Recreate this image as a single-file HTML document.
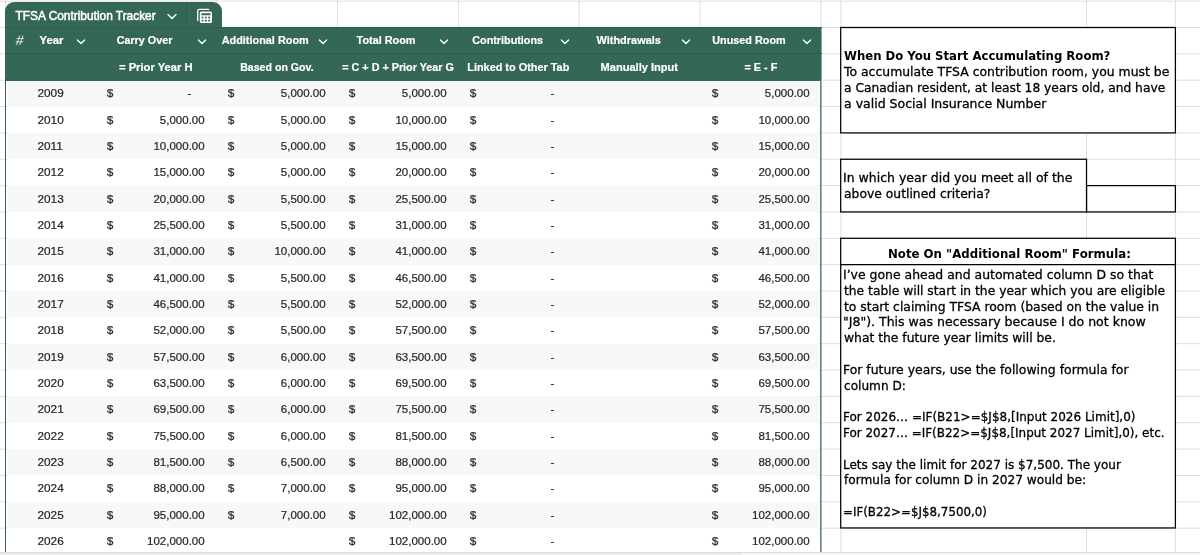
<!DOCTYPE html>
<html lang="en"><head><meta charset="utf-8"><title>TFSA Contribution Tracker</title>
<style>
html,body{margin:0;padding:0;background:#fff;}
body{width:1200px;height:555px;overflow:hidden;position:relative;font-family:"Liberation Sans",sans-serif;}
#sheet{will-change:transform;position:absolute;left:0;top:0;width:1200px;height:555px;overflow:hidden;background:#fff;}
.gridsvg,.boxsvg{position:absolute;left:0;top:0;}
.tbl .row{position:absolute;left:7px;width:812px;height:26.35px;background:#fff;font-size:11.8px;color:#262626;-webkit-text-stroke:0.22px #262626;line-height:26.35px;white-space:nowrap;}
.tbl .row.odd{background:#f6f8f9;}
.tbl .row span{position:absolute;top:0;margin-left:-7px;}
.tbl .row .yr{left:37.5px;}
.tbl .row .n{width:109.7px;text-align:right;transform:scaleX(0.977);transform-origin:100% 50%;}
.tbl .row .n.dash{width:96.3px;}
.hdr{position:absolute;left:5px;top:27px;width:816px;box-shadow:1px 0 0 #8fac9f;height:53.5px;background:#356854;}
.tab{position:absolute;left:5px;top:2px;width:217px;height:26px;background:#356854;border-radius:9px 9px 0 0;}
.tab .ttl{position:absolute;left:10.6px;top:0.6px;line-height:26px;font-size:11.9px;color:#fff;-webkit-text-stroke:0.5px #fff;white-space:nowrap;}
.tab .tsep{position:absolute;left:180.5px;top:0;width:1px;height:26px;background:#2e5e4b;}
.ticon{position:absolute;}
.hdr .t{position:absolute;color:#fff;-webkit-text-stroke:0.2px #fff;font-size:11.8px;white-space:nowrap;text-align:center;line-height:26.35px;}
.hdr .t b{display:inline-block;transform:scaleX(0.92);transform-origin:50% 50%;}
.hdr .hash{font-size:14px;-webkit-text-stroke:0;opacity:.92;}
.hdr .hash i{display:inline-block;font-style:normal;transform:skewX(-8deg);}
.hdr .sep0{position:absolute;left:0;top:0;width:817px;height:1px;background:#2f5f4c;}
.hdr .r1{top:0.2px;}
.hdr .r2{top:26.6px;}
.hdr .sep{position:absolute;left:0;top:26.4px;width:817px;height:1px;background:#2c5a48;}
.lb{position:absolute;left:5px;top:27px;width:1px;height:526px;background:#356854;}
.rb{position:absolute;left:820px;top:80px;width:1px;height:473px;background:#5a8773;box-shadow:1px 0 0 #9db9ad;}
svg.chev{position:absolute;}
.box{position:absolute;border:1px solid #000;box-sizing:border-box;background:#fff;}
.note{font-family:"DejaVu Sans","Liberation Sans",sans-serif;color:#000;-webkit-text-stroke:0.3px #000;font-size:12.4px;line-height:16px;white-space:nowrap;}
.note p b{-webkit-text-stroke:0;}
.note p{position:absolute;margin:0;transform-origin:0 50%;height:16px;}
.botline{position:absolute;left:0;top:552px;width:1200px;height:1px;background:#dcdcdc;}
.botbar{position:absolute;left:0;top:553px;width:742px;height:2px;background:#ececec;}
.botbar2{position:absolute;left:742px;top:553px;width:458px;height:2px;background:#f7f7f7;}

</style></head>
<body>
<div id="sheet">
<svg class="gridsvg" width="1200" height="555" viewBox="0 0 1200 555"><g stroke="#dedede" stroke-width="1" fill="none">
<path d="M0 1.15H1200M0 27.50H1200M0 53.85H1200M0 80.20H1200M0 106.55H1200M0 132.90H1200M0 159.25H1200M0 185.60H1200M0 211.95H1200M0 238.30H1200M0 264.65H1200M0 291.00H1200M0 317.35H1200M0 343.70H1200M0 370.05H1200M0 396.40H1200M0 422.75H1200M0 449.10H1200M0 475.45H1200M0 501.80H1200M0 528.15H1200M5.4 0V552M95.8 0V552M216.6 0V552M337.5 0V552M458.4 0V552M579.2 0V552M700.1 0V552M820.9 0V552M840.85 0V552M1086.5 0V552M1175.4 0V552"/></g></svg>
<div class="tbl">
<div class="row odd" style="top:80.20px"><span class="yr">2009</span><span class="d" style="left:106.8px">$</span><span class="n dash" style="left:95px">-</span><span class="d" style="left:227.8px">$</span><span class="n" style="left:216px">5,000.00</span><span class="d" style="left:348.8px">$</span><span class="n" style="left:337px">5,000.00</span><span class="d" style="left:469.8px">$</span><span class="n dash" style="left:458px">-</span><span class="d" style="left:711.8px">$</span><span class="n" style="left:700px">5,000.00</span></div>
<div class="row" style="top:106.55px"><span class="yr">2010</span><span class="d" style="left:106.8px">$</span><span class="n" style="left:95px">5,000.00</span><span class="d" style="left:227.8px">$</span><span class="n" style="left:216px">5,000.00</span><span class="d" style="left:348.8px">$</span><span class="n" style="left:337px">10,000.00</span><span class="d" style="left:469.8px">$</span><span class="n dash" style="left:458px">-</span><span class="d" style="left:711.8px">$</span><span class="n" style="left:700px">10,000.00</span></div>
<div class="row odd" style="top:132.90px"><span class="yr">2011</span><span class="d" style="left:106.8px">$</span><span class="n" style="left:95px">10,000.00</span><span class="d" style="left:227.8px">$</span><span class="n" style="left:216px">5,000.00</span><span class="d" style="left:348.8px">$</span><span class="n" style="left:337px">15,000.00</span><span class="d" style="left:469.8px">$</span><span class="n dash" style="left:458px">-</span><span class="d" style="left:711.8px">$</span><span class="n" style="left:700px">15,000.00</span></div>
<div class="row" style="top:159.25px"><span class="yr">2012</span><span class="d" style="left:106.8px">$</span><span class="n" style="left:95px">15,000.00</span><span class="d" style="left:227.8px">$</span><span class="n" style="left:216px">5,000.00</span><span class="d" style="left:348.8px">$</span><span class="n" style="left:337px">20,000.00</span><span class="d" style="left:469.8px">$</span><span class="n dash" style="left:458px">-</span><span class="d" style="left:711.8px">$</span><span class="n" style="left:700px">20,000.00</span></div>
<div class="row odd" style="top:185.60px"><span class="yr">2013</span><span class="d" style="left:106.8px">$</span><span class="n" style="left:95px">20,000.00</span><span class="d" style="left:227.8px">$</span><span class="n" style="left:216px">5,500.00</span><span class="d" style="left:348.8px">$</span><span class="n" style="left:337px">25,500.00</span><span class="d" style="left:469.8px">$</span><span class="n dash" style="left:458px">-</span><span class="d" style="left:711.8px">$</span><span class="n" style="left:700px">25,500.00</span></div>
<div class="row" style="top:211.95px"><span class="yr">2014</span><span class="d" style="left:106.8px">$</span><span class="n" style="left:95px">25,500.00</span><span class="d" style="left:227.8px">$</span><span class="n" style="left:216px">5,500.00</span><span class="d" style="left:348.8px">$</span><span class="n" style="left:337px">31,000.00</span><span class="d" style="left:469.8px">$</span><span class="n dash" style="left:458px">-</span><span class="d" style="left:711.8px">$</span><span class="n" style="left:700px">31,000.00</span></div>
<div class="row odd" style="top:238.30px"><span class="yr">2015</span><span class="d" style="left:106.8px">$</span><span class="n" style="left:95px">31,000.00</span><span class="d" style="left:227.8px">$</span><span class="n" style="left:216px">10,000.00</span><span class="d" style="left:348.8px">$</span><span class="n" style="left:337px">41,000.00</span><span class="d" style="left:469.8px">$</span><span class="n dash" style="left:458px">-</span><span class="d" style="left:711.8px">$</span><span class="n" style="left:700px">41,000.00</span></div>
<div class="row" style="top:264.65px"><span class="yr">2016</span><span class="d" style="left:106.8px">$</span><span class="n" style="left:95px">41,000.00</span><span class="d" style="left:227.8px">$</span><span class="n" style="left:216px">5,500.00</span><span class="d" style="left:348.8px">$</span><span class="n" style="left:337px">46,500.00</span><span class="d" style="left:469.8px">$</span><span class="n dash" style="left:458px">-</span><span class="d" style="left:711.8px">$</span><span class="n" style="left:700px">46,500.00</span></div>
<div class="row odd" style="top:291.00px"><span class="yr">2017</span><span class="d" style="left:106.8px">$</span><span class="n" style="left:95px">46,500.00</span><span class="d" style="left:227.8px">$</span><span class="n" style="left:216px">5,500.00</span><span class="d" style="left:348.8px">$</span><span class="n" style="left:337px">52,000.00</span><span class="d" style="left:469.8px">$</span><span class="n dash" style="left:458px">-</span><span class="d" style="left:711.8px">$</span><span class="n" style="left:700px">52,000.00</span></div>
<div class="row" style="top:317.35px"><span class="yr">2018</span><span class="d" style="left:106.8px">$</span><span class="n" style="left:95px">52,000.00</span><span class="d" style="left:227.8px">$</span><span class="n" style="left:216px">5,500.00</span><span class="d" style="left:348.8px">$</span><span class="n" style="left:337px">57,500.00</span><span class="d" style="left:469.8px">$</span><span class="n dash" style="left:458px">-</span><span class="d" style="left:711.8px">$</span><span class="n" style="left:700px">57,500.00</span></div>
<div class="row odd" style="top:343.70px"><span class="yr">2019</span><span class="d" style="left:106.8px">$</span><span class="n" style="left:95px">57,500.00</span><span class="d" style="left:227.8px">$</span><span class="n" style="left:216px">6,000.00</span><span class="d" style="left:348.8px">$</span><span class="n" style="left:337px">63,500.00</span><span class="d" style="left:469.8px">$</span><span class="n dash" style="left:458px">-</span><span class="d" style="left:711.8px">$</span><span class="n" style="left:700px">63,500.00</span></div>
<div class="row" style="top:370.05px"><span class="yr">2020</span><span class="d" style="left:106.8px">$</span><span class="n" style="left:95px">63,500.00</span><span class="d" style="left:227.8px">$</span><span class="n" style="left:216px">6,000.00</span><span class="d" style="left:348.8px">$</span><span class="n" style="left:337px">69,500.00</span><span class="d" style="left:469.8px">$</span><span class="n dash" style="left:458px">-</span><span class="d" style="left:711.8px">$</span><span class="n" style="left:700px">69,500.00</span></div>
<div class="row odd" style="top:396.40px"><span class="yr">2021</span><span class="d" style="left:106.8px">$</span><span class="n" style="left:95px">69,500.00</span><span class="d" style="left:227.8px">$</span><span class="n" style="left:216px">6,000.00</span><span class="d" style="left:348.8px">$</span><span class="n" style="left:337px">75,500.00</span><span class="d" style="left:469.8px">$</span><span class="n dash" style="left:458px">-</span><span class="d" style="left:711.8px">$</span><span class="n" style="left:700px">75,500.00</span></div>
<div class="row" style="top:422.75px"><span class="yr">2022</span><span class="d" style="left:106.8px">$</span><span class="n" style="left:95px">75,500.00</span><span class="d" style="left:227.8px">$</span><span class="n" style="left:216px">6,000.00</span><span class="d" style="left:348.8px">$</span><span class="n" style="left:337px">81,500.00</span><span class="d" style="left:469.8px">$</span><span class="n dash" style="left:458px">-</span><span class="d" style="left:711.8px">$</span><span class="n" style="left:700px">81,500.00</span></div>
<div class="row odd" style="top:449.10px"><span class="yr">2023</span><span class="d" style="left:106.8px">$</span><span class="n" style="left:95px">81,500.00</span><span class="d" style="left:227.8px">$</span><span class="n" style="left:216px">6,500.00</span><span class="d" style="left:348.8px">$</span><span class="n" style="left:337px">88,000.00</span><span class="d" style="left:469.8px">$</span><span class="n dash" style="left:458px">-</span><span class="d" style="left:711.8px">$</span><span class="n" style="left:700px">88,000.00</span></div>
<div class="row" style="top:475.45px"><span class="yr">2024</span><span class="d" style="left:106.8px">$</span><span class="n" style="left:95px">88,000.00</span><span class="d" style="left:227.8px">$</span><span class="n" style="left:216px">7,000.00</span><span class="d" style="left:348.8px">$</span><span class="n" style="left:337px">95,000.00</span><span class="d" style="left:469.8px">$</span><span class="n dash" style="left:458px">-</span><span class="d" style="left:711.8px">$</span><span class="n" style="left:700px">95,000.00</span></div>
<div class="row odd" style="top:501.80px"><span class="yr">2025</span><span class="d" style="left:106.8px">$</span><span class="n" style="left:95px">95,000.00</span><span class="d" style="left:227.8px">$</span><span class="n" style="left:216px">7,000.00</span><span class="d" style="left:348.8px">$</span><span class="n" style="left:337px">102,000.00</span><span class="d" style="left:469.8px">$</span><span class="n dash" style="left:458px">-</span><span class="d" style="left:711.8px">$</span><span class="n" style="left:700px">102,000.00</span></div>
<div class="row" style="top:528.15px"><span class="yr">2026</span><span class="d" style="left:106.8px">$</span><span class="n" style="left:95px">102,000.00</span><span class="d" style="left:348.8px">$</span><span class="n" style="left:337px">102,000.00</span><span class="d" style="left:469.8px">$</span><span class="n dash" style="left:458px">-</span><span class="d" style="left:711.8px">$</span><span class="n" style="left:700px">102,000.00</span></div>
</div>
<div class="tab"><span class="ttl">TFSA Contribution Tracker</span><i class="tsep"></i><svg class="chev" style="left:160.7px;top:10.6px" width="12" height="8" viewBox="0 0 12 8"><polyline points="2,1.6 6,5.6 10,1.6" fill="none" stroke="#fff" stroke-width="1.35" stroke-linecap="round" stroke-linejoin="round"/></svg><svg class="ticon" style="left:191px;top:6px" width="18" height="18" viewBox="0 0 18 18">
<path d="M1.7,12.4 V3.4 Q1.7,1.4 3.7,1.4 H12.6" fill="none" stroke="#fff" stroke-width="1.3" stroke-linecap="round"/>
<rect x="3.8" y="3.5" width="12.2" height="11.6" rx="1.6" fill="#fff"/>
<rect x="5.2" y="5.3" width="9.4" height="1.9" rx="0.4" fill="#356854"/>
<g fill="#356854"><rect x="5.6" y="8.7" width="1.9" height="1.7"/><rect x="8.9" y="8.7" width="1.9" height="1.7"/><rect x="12.2" y="8.7" width="1.9" height="1.7"/>
<rect x="5.6" y="11.8" width="1.9" height="1.7"/><rect x="8.9" y="11.8" width="1.9" height="1.7"/><rect x="12.2" y="11.8" width="1.9" height="1.7"/></g>
</svg></div>
<div class="hdr">
<div class="sep0"></div><div class="sep"></div>
<span class="t r1 hash" style="left:6.8px;width:16px"><i>#</i></span>
<span class="t r1" style="left:26.1px;width:40px"><b style="transform:scaleX(0.955)">Year</b></span>
<span class="t r1" style="left:79.25px;width:120px"><b style="transform:scaleX(0.913)">Carry Over</b></span>
<span class="t r1" style="left:200.25px;width:120px"><b style="transform:scaleX(0.923)">Additional Room</b></span>
<span class="t r1" style="left:321.25px;width:120px"><b style="transform:scaleX(0.918)">Total Room</b></span>
<span class="t r1" style="left:442.25px;width:120px"><b style="transform:scaleX(0.916)">Contributions</b></span>
<span class="t r1" style="left:563.25px;width:120px"><b style="transform:scaleX(0.929)">Withdrawals</b></span>
<span class="t r1" style="left:684.25px;width:120px"><b style="transform:scaleX(0.919)">Unused Room</b></span>
<span class="t r2" style="left:80.60px;width:140px"><b style="transform:scaleX(0.948)">= Prior Year H</b></span>
<span class="t r2" style="left:201.60px;width:140px"><b style="transform:scaleX(0.899)">Based on Gov.</b></span>
<span class="t r2" style="left:322.60px;width:140px"><b style="transform:scaleX(0.913)">= C + D + Prior Year G</b></span>
<span class="t r2" style="left:443.60px;width:140px"><b style="transform:scaleX(0.923)">Linked to Other Tab</b></span>
<span class="t r2" style="left:564.60px;width:140px"><b style="transform:scaleX(0.939)">Manually Input</b></span>
<span class="t r2" style="left:685.60px;width:140px"><b style="transform:scaleX(0.923)">= E - F</b></span>
<svg class="chev" style="left:69.5px;top:11.0px" width="12" height="8" viewBox="0 0 12 8"><polyline points="2.4,1.9 6,5.5 9.6,1.9" fill="none" stroke="#fff" stroke-width="1.35" stroke-linecap="round" stroke-linejoin="round"/></svg><svg class="chev" style="left:190.5px;top:11.0px" width="12" height="8" viewBox="0 0 12 8"><polyline points="2.4,1.9 6,5.5 9.6,1.9" fill="none" stroke="#fff" stroke-width="1.35" stroke-linecap="round" stroke-linejoin="round"/></svg><svg class="chev" style="left:311.5px;top:11.0px" width="12" height="8" viewBox="0 0 12 8"><polyline points="2.4,1.9 6,5.5 9.6,1.9" fill="none" stroke="#fff" stroke-width="1.35" stroke-linecap="round" stroke-linejoin="round"/></svg><svg class="chev" style="left:432.5px;top:11.0px" width="12" height="8" viewBox="0 0 12 8"><polyline points="2.4,1.9 6,5.5 9.6,1.9" fill="none" stroke="#fff" stroke-width="1.35" stroke-linecap="round" stroke-linejoin="round"/></svg><svg class="chev" style="left:553.5px;top:11.0px" width="12" height="8" viewBox="0 0 12 8"><polyline points="2.4,1.9 6,5.5 9.6,1.9" fill="none" stroke="#fff" stroke-width="1.35" stroke-linecap="round" stroke-linejoin="round"/></svg><svg class="chev" style="left:674.5px;top:11.0px" width="12" height="8" viewBox="0 0 12 8"><polyline points="2.4,1.9 6,5.5 9.6,1.9" fill="none" stroke="#fff" stroke-width="1.35" stroke-linecap="round" stroke-linejoin="round"/></svg><svg class="chev" style="left:795.5px;top:11.0px" width="12" height="8" viewBox="0 0 12 8"><polyline points="2.4,1.9 6,5.5 9.6,1.9" fill="none" stroke="#fff" stroke-width="1.35" stroke-linecap="round" stroke-linejoin="round"/></svg></div>
<div class="lb"></div><div class="rb"></div>
<div class="botline"></div><div class="botbar"></div><div class="botbar2"></div>
<svg class="boxsvg" width="1200" height="555" viewBox="0 0 1200 555"><g fill="#fff" stroke="#000" stroke-width="1.25"><rect x="840.7" y="27.50" width="334.70" height="105.40"/><rect x="1086.5" y="185.60" width="88.90" height="26.35"/><rect x="840.7" y="159.25" width="245.80" height="52.70"/><rect x="840.7" y="238.30" width="334.70" height="289.65"/><path d="M840.7 264.65H1175.4"/></g></svg>
<div class="note">
<p id="a1" style="left:844.00px;top:48.00px;transform:scaleX(0.9431)"><b>When Do You Start Accumulating Room?</b></p>
<p id="a2" style="left:844.00px;top:63.70px;transform:scaleX(1.0019)">To accumulate TFSA contribution room, you must be</p>
<p id="a3" style="left:844.00px;top:79.90px;transform:scaleX(0.9889)">a Canadian resident, at least 18 years old, and have</p>
<p id="a4" style="left:844.00px;top:95.80px;transform:scaleX(1.0100)">a valid Social Insurance Number</p>
<p id="b1" style="left:843.00px;top:170.00px;transform:scaleX(1.0080)">In which year did you meet all of the</p>
<p id="b2" style="left:844.00px;top:185.90px;transform:scaleX(0.9960)">above outlined criteria?</p>
<p id="c0" style="left:887.90px;top:245.80px;transform:scaleX(0.9494)"><b>Note On "Additional Room" Formula:</b></p>
<p id="c1" style="left:843.00px;top:267.00px;transform:scaleX(1.0039)">I’ve gone ahead and automated column D so that</p>
<p id="c2" style="left:844.00px;top:282.80px;transform:scaleX(0.9926)">the table will start in the year which you are eligible</p>
<p id="c3" style="left:844.00px;top:298.60px;transform:scaleX(0.9987)">to start claiming TFSA room (based on the value in</p>
<p id="c4" style="left:843.00px;top:314.40px;transform:scaleX(1.0108)">"J8"). This was necessary because I do not know</p>
<p id="c5" style="left:844.00px;top:330.10px;transform:scaleX(0.9944)">what the future year limits will be.</p>
<p id="c7" style="left:843.00px;top:361.70px;transform:scaleX(1.0014)">For future years, use the following formula for</p>
<p id="c8" style="left:844.00px;top:377.50px;transform:scaleX(0.9778)">column D:</p>
<p id="c10" style="left:843.00px;top:409.10px;transform:scaleX(0.9686)">For 2026… =IF(B21&gt;=$J$8,[Input 2026 Limit],0)</p>
<p id="c11" style="left:843.00px;top:424.90px;transform:scaleX(0.9653)">For 2027… =IF(B22&gt;=$J$8,[Input 2027 Limit],0), etc.</p>
<p id="c13" style="left:843.00px;top:456.50px;transform:scaleX(0.9691)">Lets say the limit for 2027 is $7,500. The your</p>
<p id="c14" style="left:844.00px;top:472.30px;transform:scaleX(0.9804)">formula for column D in 2027 would be:</p>
<p id="c16" style="left:843.00px;top:503.90px;transform:scaleX(0.9568)">=IF(B22&gt;=$J$8,7500,0)</p>
</div>
</div>
</body></html>
